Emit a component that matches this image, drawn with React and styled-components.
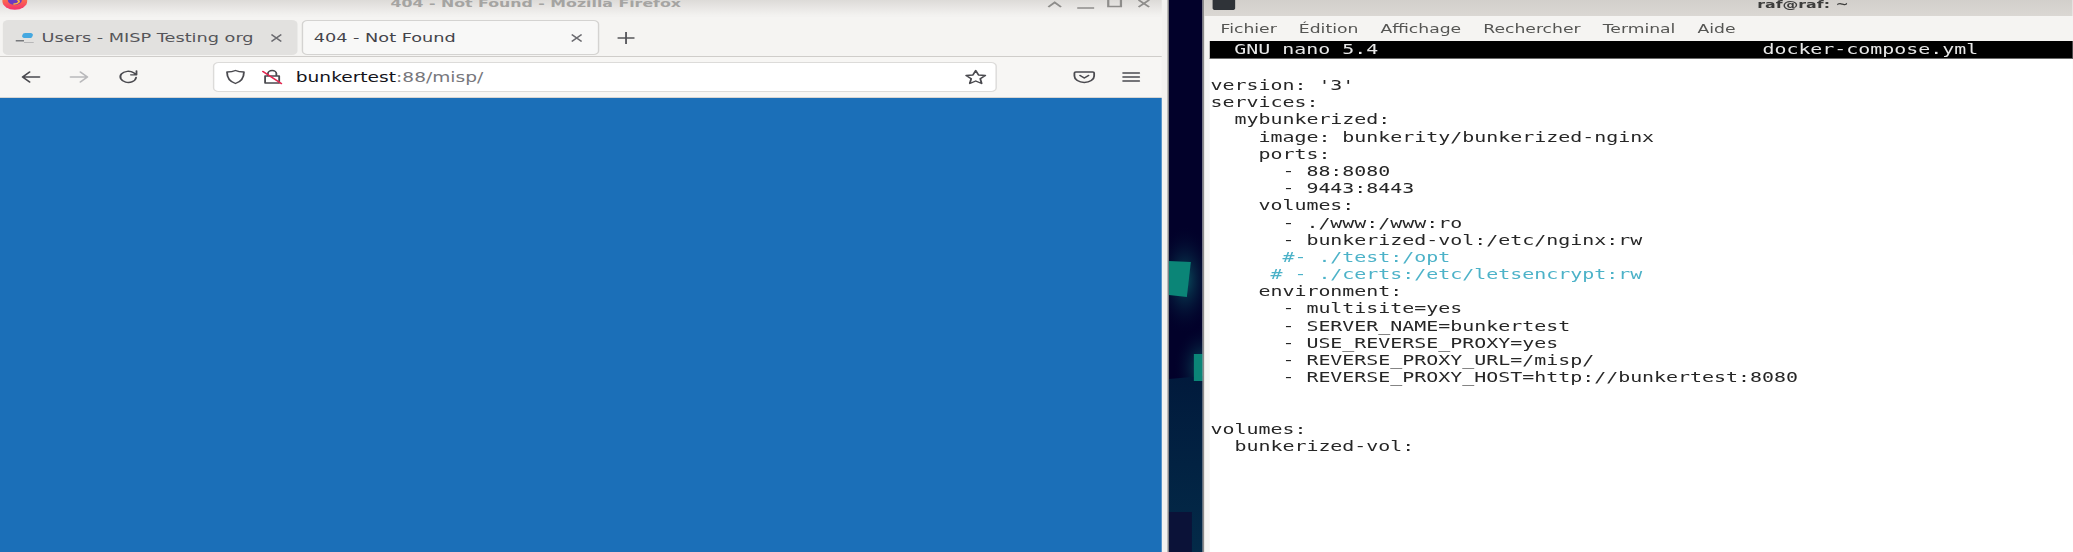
import React from "react";
import styled, { createGlobalStyle } from "styled-components";

// the whole screenshot is stretched sideways, so lay out at base width and stretch once
const STRETCH = 1.41;

const GlobalStyle = createGlobalStyle`
  html, body {
    margin: 0;
    padding: 0;
    overflow: hidden;
    background: #f5f4f2;
  }
`;

const Desktop = styled.div`
  display: flex;
  width: ${2073 / STRETCH}px;
  height: 552px;
  overflow: hidden;
  transform: scaleX(${STRETCH});
  transform-origin: left top;
  filter: blur(0.45px);
  font-family: "DejaVu Sans", sans-serif;
`;

//BROWSER
const Browser = styled.div`
  display: flex;
  flex-direction: column;
  width: 824px;
  flex-shrink: 0;
  background: #f5f4f2;
`;

const TitleBar = styled.div`
  display: flex;
  height: 17px;
  flex-shrink: 0;
  overflow: hidden;
  background: linear-gradient(#dddbd8, #f3f2f0 90%);
`;

const Logo = styled.svg`
  width: 20px;
  height: 17px;
  margin-left: 1px;
  flex-shrink: 0;
`;

const WindowTitle = styled.div`
  margin: -5px 0 0 256px;
  font-size: 11.2px;
  line-height: 17px;
  font-weight: 700;
  color: #a5a4a2;
  white-space: nowrap;
`;

const Controls = styled.div`
  display: flex;
  margin-left: auto;
`;

const ControlIcon = styled.svg`
  width: 21.8px;
  height: 17px;
  fill: none;
  stroke: #8e8d8b;
  stroke-width: 1.6;
`;

const TabBar = styled.div`
  display: flex;
  align-items: flex-start;
  gap: 3.5px;
  height: 40px;
  flex-shrink: 0;
  box-sizing: border-box;
  padding: 3px 0 0 1.5px;
  border-bottom: 1.5px solid #cfcdca;
`;

const Tab = styled.div`
  display: flex;
  align-items: center;
  box-sizing: border-box;
  width: ${(p) => (p.$active ? 211 : 209)}px;
  height: 35px;
  padding: 0 9px 0 ${(p) => (p.$active ? 7.5 : 9)}px;
  border-radius: 4px;
  font-size: 12.55px;
  white-space: nowrap;
  color: ${(p) => (p.$active ? "#44444a" : "#55555a")};
  background: ${(p) => (p.$active ? "#f8f8f7" : "#e2e1df")};
  border: ${(p) => (p.$active ? "1px solid #d4d3d1" : "none")};
`;

const Favicon = styled.svg`
  width: 13px;
  height: 12px;
  margin-right: 6px;
  flex-shrink: 0;
`;

const TabClose = styled.svg`
  width: 12px;
  height: 12px;
  margin-left: auto;
  fill: none;
  stroke: #6b6b70;
  stroke-width: 1.2;
`;

const NewTab = styled.svg`
  width: 14px;
  height: 14px;
  margin: 11px 0 0 8.5px;
  fill: none;
  stroke: #55555a;
  stroke-width: 1.3;
`;

const NavBar = styled.div`
  display: flex;
  align-items: center;
  height: 41px;
  flex-shrink: 0;
  box-sizing: border-box;
  padding: 0 0 0 5px;
  background: #f7f6f4;
  border-bottom: 1.5px solid #d6d5d3;
`;

const NavButton = styled.div`
  display: flex;
  align-items: center;
  justify-content: center;
  width: 34.3px;
  height: 24px;
  flex-shrink: 0;
`;

const NavIcon = styled.svg`
  width: 16px;
  height: 16px;
  flex-shrink: 0;
  fill: none;
  stroke: ${(p) => (p.$muted ? "#b9b9bb" : "#4a4a4f")};
  stroke-width: 1.3;
  stroke-linecap: round;
  stroke-linejoin: round;
`;

const StarIcon = styled(NavIcon)`
  margin-left: auto;
`;

const UrlBar = styled.div`
  display: flex;
  align-items: center;
  gap: 9.2px;
  width: 556px;
  height: 30px;
  margin-left: 43.5px;
  box-sizing: border-box;
  padding: 0 6px 0 7px;
  background: #fff;
  border: 1px solid #dcdbd9;
  border-radius: 4px;
  font-size: 13.2px;
  color: #15141a;
`;

const UrlHost = styled.span`
  white-space: nowrap;
`;

const UrlRest = styled.span`
  color: #77777c;
`;

const ToolSlots = styled.div`
  display: flex;
  margin-left: 44.5px;
`;

const ToolButton = styled(NavButton)`
  width: 33.4px;
`;

const Page = styled.div`
  flex: 1;
  background: #1b6fb8;
`;

const Gutter = styled.div`
  width: 3.5px;
  flex-shrink: 0;
  background: #f3f2f0;
  border-right: 0.8px solid #8c8b8a;
`;

const Wallpaper = styled.svg`
  width: 24.8px;
  height: 552px;
  flex-shrink: 0;
  background: #02012a;
`;

//TERMINAL
const Terminal = styled.div`
  display: flex;
  flex-direction: column;
  flex: 1;
  min-width: 0;
  background: #f5f4f2;
  border-left: 0.8px solid #8c8b8a;
`;

const TermTitle = styled.div`
  display: flex;
  height: 16px;
  flex-shrink: 0;
  overflow: hidden;
  background: linear-gradient(#d2cfcb, #dad7d3);
`;

const TermIcon = styled.div`
  width: 16px;
  height: 10px;
  margin-left: 6px;
  background: #2f3338;
  border-radius: 0 0 2px 2px;
`;

const TermTitleText = styled.div`
  margin: -4.5px 0 0 370px;
  font-size: 11.2px;
  line-height: 17px;
  font-weight: 700;
  color: #3d3d3c;
  white-space: nowrap;
`;

const MenuBar = styled.div`
  display: flex;
  align-items: center;
  height: 25px;
  flex-shrink: 0;
  padding-left: 3.5px;
`;

const MenuItem = styled.span`
  padding: 0 7.85px;
  font-size: 12.2px;
  color: #555553;
`;

const Screen = styled.div`
  flex: 1;
  margin-left: 4.2px;
  background: #fff;
  font-family: "DejaVu Sans Mono", monospace;
  font-size: 14.13px;
  line-height: 17.2px;
  color: #262626;
  white-space: pre;
`;

const NanoBar = styled.div`
  display: flex;
  height: 18px;
  box-sizing: border-box;
  padding-left: 16.9px;
  background: #000;
  color: #e8e8e8;
  border-bottom: 1px solid #6a6a6a;
`;

const NanoFile = styled.span`
  margin-left: 272.5px;
`;

const Code = styled.div`
  padding-top: 18px;
`;

const Line = styled.div`
  height: 17.2px;
  color: ${(p) => (p.$comment ? "#4cb2c8" : "inherit")};
`;

const codeLines = [
  "version: '3'",
  "services:",
  "  mybunkerized:",
  "    image: bunkerity/bunkerized-nginx",
  "    ports:",
  "      - 88:8080",
  "      - 9443:8443",
  "    volumes:",
  "      - ./www:/www:ro",
  "      - bunkerized-vol:/etc/nginx:rw",
  "      #- ./test:/opt",
  "     # - ./certs:/etc/letsencrypt:rw",
  "    environment:",
  "      - multisite=yes",
  "      - SERVER_NAME=bunkertest",
  "      - USE_REVERSE_PROXY=yes",
  "      - REVERSE_PROXY_URL=/misp/",
  "      - REVERSE_PROXY_HOST=http://bunkertest:8080",
  "",
  "",
  "volumes:",
  "  bunkerized-vol:",
];

const menuItems = ["Fichier", "Édition", "Affichage", "Rechercher", "Terminal", "Aide"];

const App = () => {
  return (
    <>
      <GlobalStyle />
      <Desktop>
        <Browser>
          <TitleBar>
            <Logo viewBox="0 0 20 17">
              <defs>
                <linearGradient id="fox" x1="0" y1="0" x2="0" y2="1">
                  <stop offset="0" stopColor="#ff9a2e" />
                  <stop offset="1" stopColor="#f5306f" />
                </linearGradient>
              </defs>
              <circle cx="9.5" cy="1" r="8.8" fill="url(#fox)" />
              <circle cx="9.5" cy="0" r="5" fill="#6a3bc0" />
              <path d="M9 -1 a3 3 0 0 1 3.5 3 a4 4 0 0 1 -4 2" fill="none" stroke="#ffb53c" strokeWidth="1.4" />
            </Logo>
            <WindowTitle>404 - Not Found - Mozilla Firefox</WindowTitle>
            <Controls>
              <ControlIcon viewBox="0 0 21.8 17">
                <path d="M6.5 7 L11 2.5 L15.5 7" />
              </ControlIcon>
              <ControlIcon viewBox="0 0 21.8 17">
                <path d="M5 8 H17" />
              </ControlIcon>
              <ControlIcon viewBox="0 0 21.8 17">
                <path d="M6 -2 H15 V6.5 H6 Z" />
              </ControlIcon>
              <ControlIcon viewBox="0 0 21.8 17">
                <path d="M5.5 0 L13 7 M13 0 L5.5 7" />
              </ControlIcon>
            </Controls>
          </TitleBar>
          <TabBar>
            <Tab>
              <Favicon viewBox="0 0 13 12">
                <path d="M5 3 a2 2 0 0 1 2 -2 h4 a2 2 0 0 1 1 3 a2 2 0 0 1 -2 2 h-4 a2 2 0 0 1 -1 -3 Z" fill="#45a8e0" />
                <path d="M0 8 h6 v1.5 h-6 Z" fill="#77797c" />
                <path d="M6 10 h7 v0.8 h-7 Z" fill="#a8a9ab" />
              </Favicon>
              Users - MISP Testing org
              <TabClose viewBox="0 0 12 12">
                <path d="M2.5 2.5 L9.5 9.5 M9.5 2.5 L2.5 9.5" />
              </TabClose>
            </Tab>
            <Tab $active>
              404 - Not Found
              <TabClose viewBox="0 0 12 12">
                <path d="M2.5 2.5 L9.5 9.5 M9.5 2.5 L2.5 9.5" />
              </TabClose>
            </Tab>
            <NewTab viewBox="0 0 14 14">
              <path d="M7 1 V13 M1 7 H13" />
            </NewTab>
          </TabBar>
          <NavBar>
            <NavButton>
              <NavIcon viewBox="0 0 16 16">
                <path d="M14 8 H2 M7 3 L2 8 L7 13" />
              </NavIcon>
            </NavButton>
            <NavButton>
              <NavIcon $muted viewBox="0 0 16 16">
                <path d="M2 8 H14 M9 3 L14 8 L9 13" />
              </NavIcon>
            </NavButton>
            <NavButton>
              <NavIcon viewBox="0 0 16 16">
                <path d="M13.5 8.5 A5.6 5.6 0 1 1 11.8 3.8 L13.5 5.5 M13.8 1.8 V5.8 H9.8" />
              </NavIcon>
            </NavButton>
            <UrlBar>
              <NavIcon viewBox="0 0 16 16">
                <path d="M8 1.5 C10 2.8 12 3 14 3 C14 8.5 12.5 12.5 8 14.5 C3.5 12.5 2 8.5 2 3 C4 3 6 2.8 8 1.5 Z" />
              </NavIcon>
              <NavIcon viewBox="0 0 16 16">
                <path d="M5 7 V4.5 a3 3 0 0 1 6 0 V7 M3 7 H13 V14 H3 Z" />
                <path d="M1.5 2.5 L14.5 14.5" stroke="#e22850" strokeWidth="1.4" />
              </NavIcon>
              <UrlHost>
                bunkertest<UrlRest>:88/misp/</UrlRest>
              </UrlHost>
              <StarIcon viewBox="0 0 16 16">
                <path d="M8 1.5 L10 6 L14.8 6.5 L11.2 9.7 L12.2 14.5 L8 12 L3.8 14.5 L4.8 9.7 L1.2 6.5 L6 6 Z" />
              </StarIcon>
            </UrlBar>
            <ToolSlots>
              <ToolButton>
                <NavIcon viewBox="0 0 16 16">
                  <path d="M2 3 H14 a1 1 0 0 1 1 1 V7 a7 6.5 0 0 1 -14 0 V4 a1 1 0 0 1 1 -1 Z M5 6.5 L8 9 L11 6.5" />
                </NavIcon>
              </ToolButton>
              <ToolButton>
                <NavIcon viewBox="0 0 16 16">
                  <path d="M2.5 4 H14 M2.5 8 H14 M2.5 12 H14" />
                </NavIcon>
              </ToolButton>
            </ToolSlots>
          </NavBar>
          <Page />
        </Browser>
        <Gutter />
        <Wallpaper viewBox="0 0 35 552" preserveAspectRatio="none">
          <defs>
            <radialGradient id="glowA">
              <stop offset="0" stopColor="#0c6b70" stopOpacity="0.75" />
              <stop offset="1" stopColor="#02012a" stopOpacity="0" />
            </radialGradient>
            <linearGradient id="lower" x1="0" y1="0" x2="0" y2="1">
              <stop offset="0" stopColor="#011a3c" />
              <stop offset="1" stopColor="#032a48" />
            </linearGradient>
          </defs>
          <rect x="-14" y="225" width="60" height="110" fill="url(#glowA)" />
          <rect x="4" y="325" width="60" height="85" fill="url(#glowA)" />
          <path d="M0 379 L35 376 V552 H0 Z" fill="url(#lower)" />
          <path d="M0 261 L22 262 L18 297 L0 295 Z" fill="#0b8577" />
          <path d="M25 354 H35 V381 H25 Z" fill="#0b8577" />
          <path d="M0 512 H23 V552 H0 Z" fill="#0b1238" />
        </Wallpaper>
        <Terminal>
          <TermTitle>
            <TermIcon />
            <TermTitleText>raf@raf: ~</TermTitleText>
          </TermTitle>
          <MenuBar>
            {menuItems.map((item) => (
              <MenuItem key={item}>{item}</MenuItem>
            ))}
          </MenuBar>
          <Screen>
            <NanoBar>
              GNU nano 5.4
              <NanoFile>docker-compose.yml</NanoFile>
            </NanoBar>
            <Code>
              {codeLines.map((line, i) => (
                <Line key={i} $comment={line.trim().startsWith("#")}>
                  {line}
                </Line>
              ))}
            </Code>
          </Screen>
        </Terminal>
      </Desktop>
    </>
  );
};

export default App;
